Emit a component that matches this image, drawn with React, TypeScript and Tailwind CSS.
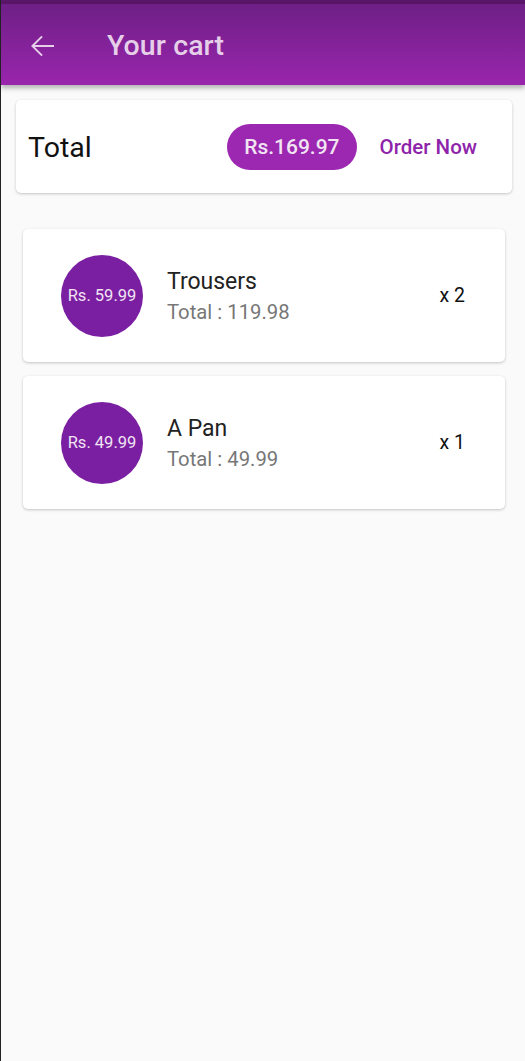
import React from "react";

const items = [
  { name: "Trousers", price: "59.99", total: "119.98", qty: 2 },
  { name: "A Pan", price: "49.99", total: "49.99", qty: 1 },
];

export default function App() {
  return (
    <div
      className="w-[525px] h-[1061px] bg-[#fafafa] border-l border-[#222] flex flex-col overflow-hidden"
      style={{ fontFamily: "Roboto, 'Noto Sans', sans-serif" }}
    >
      <div className="h-[4px] bg-[#5a1668]" />
      <div className="h-[81px] bg-gradient-to-b from-[#6e1f86] to-[#9a25ad] flex items-center shadow-[0_3px_5px_rgba(0,0,0,0.3)] relative z-10">
        <svg className="ml-[23px] w-[36px] h-[36px] mt-[2px]" viewBox="0 0 24 24" fill="#e6cfe9">
          <path d="M20 11.3H7.2l5.3-5.3-.9-.9L4.7 12l6.9 6.9.9-.9-5.3-5.3H20v-1.4z" />
        </svg>
        <span className="ml-[47px] text-[28.5px] font-medium text-[#e6cfe9] tracking-[0.1px] mt-[3px]">Your cart</span>
      </div>

      <div className="ml-[15px] mr-[13px] mt-[15px] h-[93px] bg-white rounded-[5px] shadow-[0_1px_3px_rgba(0,0,0,0.22)] flex items-center pl-[12px] pr-[35px]">
        <span className="text-[28.5px] text-[#111] flex-1 mt-[4px]">Total</span>
        <div className="h-[46px] px-[17px] rounded-full bg-[#9c27b0] flex items-center text-[21px] font-medium text-[#f1e4f3] mt-[1px]">
          <span className="mt-[1px]">Rs.169.97</span>
        </div>
        <span className="ml-[23px] text-[20.5px] font-medium text-[#8e24aa] mt-[2px]">Order Now</span>
      </div>

      <div className="mt-[36px] flex flex-col gap-[14px] ml-[22px] mr-[20px]">
        {items.map((it) => (
          <div
            key={it.name}
            className="h-[133px] bg-white rounded-[5px] shadow-[0_1px_3px_rgba(0,0,0,0.22)] flex items-center pl-[38px] pr-[40px]"
          >
            <div className="w-[82px] h-[82px] rounded-full bg-[#7b1fa2] flex items-center justify-center text-[16.5px] text-[#f1e4f3]">
              <span className="mt-[1px]">Rs. {it.price}</span>
            </div>
            <div className="ml-[24px] flex-1 flex flex-col mt-[3px]">
              <span className="text-[23px] text-[#222] leading-[30px]">{it.name}</span>
              <span className="text-[20.3px] text-[#777] leading-[30px]">Total : {it.total}</span>
            </div>
            <span className="text-[19.5px] text-[#111] mt-[1px]">x {it.qty}</span>
          </div>
        ))}
      </div>
    </div>
  );
}
